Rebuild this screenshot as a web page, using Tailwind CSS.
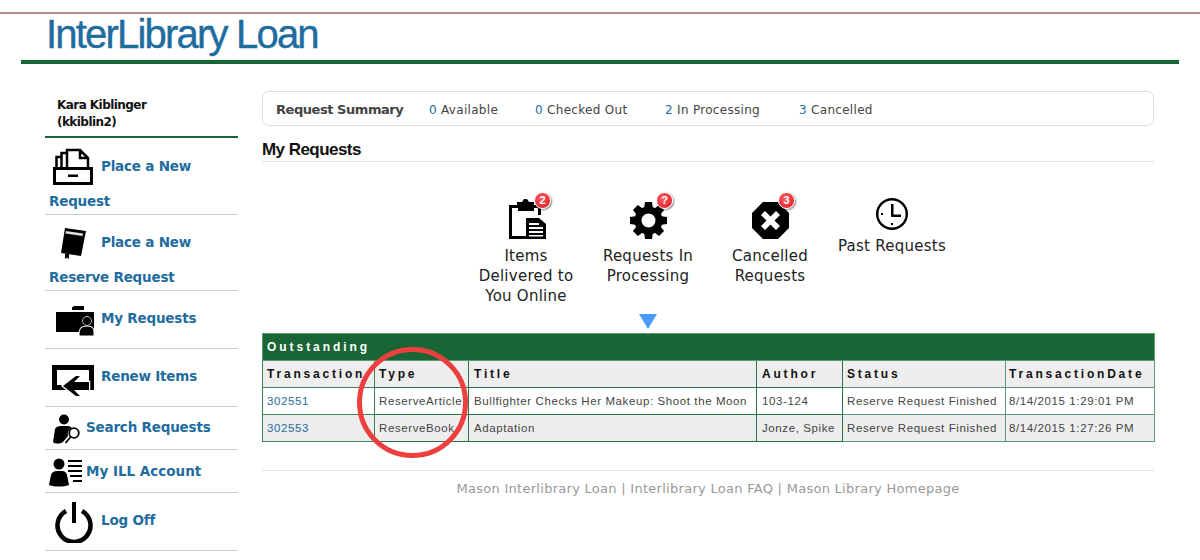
<!DOCTYPE html>
<html lang="en">
<head>
    <meta charset="UTF-8">
    <title>InterLibrary Loan</title>
    <script src="https://cdn.jsdelivr.net/npm/@tailwindcss/browser@4"></script>
</head>
<body class="bg-white font-['DejaVu_Sans',sans-serif] overflow-hidden">
<div class="relative w-[1200px] h-[560px] pt-[12px]">

    <!-- Header -->
    <div class="h-[1.5px] bg-[#b38f8c]"></div>
    <header class="mx-[21px] h-[47px] border-b-[4px] border-[#1a6535] box-content -mt-px">
        <h1 class="pl-[25px] text-[40px] leading-[42px] tracking-[-1.8px] text-[#1f6c9f] [-webkit-text-stroke:0.4px_#1f6c9f] font-['Liberation_Sans',sans-serif]">InterLibrary Loan</h1>
    </header>

    <div class="flex pt-[27px]">
        <!-- Sidebar -->
        <nav class="ml-[45px] w-[193px] text-[13.5px] font-bold text-[#1f6c9f] tracking-[-0.2px]">
            <div class="h-[47px] pl-[12px] pt-[6px] border-b-[2px] border-[#1a6535] text-[12px] leading-[17px] text-[#111] tracking-[-0.55px] mb-[9px]">Kara Kiblinger<br>(kkiblin2)</div>

            <a class="block h-[68px] border-b border-[#ccc]">
                <div class="flex h-[39px] items-center">
                    <svg class="ml-[8px] w-[40px] h-[37px] mr-[8px]" viewBox="0 0 40 37">
                        <path d="M3.500 19V9H8M8.500 19V5H13M14 19V2H27L35 10V19M27 2V10H35" fill="none" stroke="#000" stroke-width="2.500"/>
                        <path d="M1.500 20.500h37v15h-37z" fill="#fff" stroke="#000" stroke-width="3"/>
                        <path d="M15 26.500h10v2.500H15z" fill="#000"/>
                    </svg>
                    <span class="mt-[1px]">Place a New</span>
                </div>
                <div class="pl-[4px] pt-[6px] leading-[18px]">Request</div>
            </a>

            <a class="block h-[76px] border-b border-[#ccc] pt-[12px]">
                <div class="flex h-[32px] items-center">
                    <svg class="ml-[14px] w-[28px] h-[32px] mr-[14px]" viewBox="0 0 28 32">
                        <path d="M6 1 27 4 22 29 2 26z" fill="#000"/><path d="M7 4 24 6.500 23.500 9 6.500 6.500z" fill="#ddd"/><path d="M6 27h4v5L8 30.500 6 32z" fill="#000"/>
                    </svg>
                    <span>Place a New</span>
                </div>
                <div class="pl-[4px] pt-[9px] leading-[18px]">Reserve Request</div>
            </a>

            <a class="flex h-[58px] border-b border-[#ccc] items-start pt-[15px]">
                <svg class="ml-[11px] w-[38px] h-[30px] mr-[7px]" viewBox="0 0 38 30">
                    <path d="M16 4V1.500L18 0h10v4z" fill="#000"/>
                    <path d="M0 6h38v20H0z" fill="#000"/>
                    <circle cx="31" cy="15" r="4" fill="#000" stroke="#fff" stroke-width="1.500" paint-order="stroke"/>
                    <path d="M23.500 29.500c0-6 1-9 7.500-9s6.500 3 6.500 9z" fill="#000" stroke="#fff" stroke-width="2" paint-order="stroke"/>
                </svg>
                <span class="mt-[3px] leading-[18px]">My Requests</span>
            </a>

            <a class="flex h-[58px] border-b border-[#ccc] items-start pt-[16px]">
                <svg class="ml-[7px] w-[42px] h-[32px] mr-[7px]" viewBox="0 0 42 32">
                    <path fill-rule="evenodd" d="M0 0h42v25H0zM5 5v15h32V5z" fill="#000"/>
                    <path d="M11 21 24 11H28L22 17H37V25H22L28 31H24z" fill="#000" stroke="#fff" stroke-width="2.500" paint-order="stroke"/>
                </svg>
                <span class="mt-[2px] leading-[18px]">Renew Items</span>
            </a>

            <a class="flex h-[43px] border-b border-[#ccc] items-start pt-[7px]">
                <svg class="ml-[7px] w-[28px] h-[30px] mr-[6px]" viewBox="0 0 28 30">
                    <circle cx="12" cy="5.500" r="5" fill="#000"/>
                    <path d="M1 28 3 15c1-2 3-3 6-3h7c2 0 3 1 4 2-3 1-5 4-4 8l-5 6c-3 2-8 2-10 0z" fill="#000"/>
                    <circle cx="22" cy="19" r="4.800" fill="#fff" stroke="#000" stroke-width="1.800"/>
                    <path d="M18.500 23l-5 6" stroke="#000" stroke-width="1.800"/>
                </svg>
                <span class="mt-[4px] leading-[18px]">Search Requests</span>
            </a>

            <a class="flex h-[43px] border-b border-[#ccc] items-start pt-[8px]">
                <svg class="ml-[4px] w-[33px] h-[29px] mr-[4px]" viewBox="0 0 33 29">
                    <circle cx="10" cy="6" r="5.500" fill="#000"/>
                    <path d="M0 27 2 17c1-3 3-4 6-4h5c3 0 4 1 5 4l2 10c-6 2-14 2-20 0z" fill="#000"/>
                    <path d="M19 2h14v2H19zM19 7h14v2H19zM19 12h14v2H19zM21 17h12v2H21zM24 22h9v2h-9z" fill="#000"/>
                </svg>
                <span class="mt-[4px] leading-[18px] tracking-[0px]">My ILL Account</span>
            </a>

            <a class="flex h-[58px] border-b border-[#ccc] items-start pt-[9px]">
                <svg class="ml-[10px] w-[38px] h-[41px] mr-[8px]" viewBox="0 0 38 41">
                    <path d="M11 9a16.500 16.500 0 1 0 16 0" fill="none" stroke="#000" stroke-width="4.500"/>
                    <path d="M17 0h4v21h-4z" fill="#000"/>
                </svg>
                <span class="mt-[9px] leading-[18px]">Log Off</span>
            </a>
        </nav>

        <!-- Main -->
        <main class="ml-[24px] w-[892px]">
            <div class="flex items-center h-[35px] pt-[3px] border border-[#ddd] rounded-[7px] text-[12px] text-[#444] tracking-[0.3px] shadow-[0_0_2px_rgba(0,0,0,0.05)]">
                <b class="ml-[13px] w-[153px] text-[13px] tracking-[-0.45px]">Request Summary</b>
                <span class="w-[106px]"><span class="text-[#1f6c9f]">0</span> Available</span>
                <span class="w-[130px]"><span class="text-[#1f6c9f]">0</span> Checked Out</span>
                <span class="w-[134px]"><span class="text-[#1f6c9f]">2</span> In Processing</span>
                <span><span class="text-[#1f6c9f]">3</span> Cancelled</span>
            </div>

            <h2 class="mt-[14px] pb-[2px] h-[22px] border-b border-[#e5e5e5] font-['Liberation_Sans',sans-serif] font-bold text-[17px] leading-[20px] tracking-[-0.55px] text-[#111]">My Requests</h2>

            <div class="mt-[34px] flex pl-[203px] text-[15px] leading-[20px] text-[#222] text-center tracking-[0.25px] h-[117px]">
                <div class="relative w-[122px]">
                    <svg class="mx-auto mt-[3px] mb-[7px] w-[40px] h-[40px] relative left-[2px]" viewBox="0 0 40 40">
                        <path d="M1 6h8V3h5l2-3h3l2 3h5v3h7v10h-3V9h-4v3H10V9H4v28h22v3H1z" fill="#000"/>
                        <path d="M18 19h13l7 6v15H18z" fill="#000"/>
                        <path d="M21 24h10v2H21zM21 28h14v2H21zM21 32h14v2H21zM21 36h14v1.500H21z" fill="#fff"/>
                    </svg>
                    <div>Items<br>Delivered to<br>You Online</div>
                    <span class="absolute left-[69px] top-[-4px] w-[17px] h-[17px] rounded-full bg-[radial-gradient(circle_at_40%_35%,#ff5a5f,#dc1a24)] border border-white shadow-[1px_1px_2px_rgba(0,0,0,0.5)] text-white text-[11px] leading-[15px] font-bold tracking-normal font-['Liberation_Sans',sans-serif]">2</span>
                </div>
                <div class="relative w-[122px]">
                    <svg class="mx-auto mt-[6px] mb-[7px] w-[37px] h-[37px]" viewBox="0 0 37 37">
                        <circle cx="18.500" cy="18.500" r="10.500" fill="none" stroke="#000" stroke-width="7"/>
                        <g fill="#000">
                            <path d="M15 0h7l1 7h-9z"/>
                            <path d="M15 0h7l1 7h-9z" transform="rotate(45 18.500 18.500)"/>
                            <path d="M15 0h7l1 7h-9z" transform="rotate(90 18.500 18.500)"/>
                            <path d="M15 0h7l1 7h-9z" transform="rotate(135 18.500 18.500)"/>
                            <path d="M15 0h7l1 7h-9z" transform="rotate(180 18.500 18.500)"/>
                            <path d="M15 0h7l1 7h-9z" transform="rotate(225 18.500 18.500)"/>
                            <path d="M15 0h7l1 7h-9z" transform="rotate(270 18.500 18.500)"/>
                            <path d="M15 0h7l1 7h-9z" transform="rotate(315 18.500 18.500)"/>
                        </g>
                    </svg>
                    <div>Requests In<br>Processing</div>
                    <span class="absolute left-[69px] top-[-4px] w-[17px] h-[17px] rounded-full bg-[radial-gradient(circle_at_40%_35%,#ff5a5f,#dc1a24)] border border-white shadow-[1px_1px_2px_rgba(0,0,0,0.5)] text-white text-[11px] leading-[15px] font-bold tracking-normal font-['Liberation_Sans',sans-serif]">?</span>
                </div>
                <div class="relative w-[122px]">
                    <svg class="mx-auto mt-[6px] mb-[7px] w-[37px] h-[37px]" viewBox="0 0 37 37">
                        <path d="M11 0h15l11 11v15L26 37H11L0 26V11z" fill="#000"/>
                        <path d="M9 13l4-4 5.500 5.500L24 9l4 4-5.500 5.500L28 24l-4 4-5.500-5.500L13 28l-4-4 5.500-5.500z" fill="#fff"/>
                    </svg>
                    <div>Cancelled<br>Requests</div>
                    <span class="absolute left-[69px] top-[-4px] w-[17px] h-[17px] rounded-full bg-[radial-gradient(circle_at_40%_35%,#ff5a5f,#dc1a24)] border border-white shadow-[1px_1px_2px_rgba(0,0,0,0.5)] text-white text-[11px] leading-[15px] font-bold tracking-normal font-['Liberation_Sans',sans-serif]">3</span>
                </div>
                <div class="w-[122px]">
                    <svg class="mx-auto mt-[2px] mb-[6px] w-[32px] h-[32px]" viewBox="0 0 32 32">
                        <circle cx="16" cy="16" r="14.800" fill="none" stroke="#000" stroke-width="2.400"/>
                        <path d="M15 6h2.500v10.500H25V19H15z" fill="#000"/>
                        <path d="M5 15h2v2H5zM15 25h2v2h-2z" fill="#000"/>
                    </svg>
                    <div>Past Requests</div>
                </div>
            </div>

            <!-- Table -->
            <div class="relative h-[20px]">
                <svg class="absolute left-[377px] top-[1px] w-[18px] h-[15px]" viewBox="0 0 18 15"><path d="M0 0h18L9 15z" fill="#4a9bf5"/></svg>
            </div>
            <table class="w-[892px] table-fixed border-collapse font-['Liberation_Sans',sans-serif] text-[11.5px] text-[#444] tracking-[0.6px]">
                <colgroup>
                    <col class="w-[112px]"><col class="w-[94px]"><col class="w-[288px]"><col class="w-[86px]"><col class="w-[163px]"><col class="w-[149px]">
                </colgroup>
                <thead>
                    <tr class="h-[27px] bg-[#1a6535]">
                        <th colspan="6" class="pl-[4px] text-left text-white text-[12px] font-bold tracking-[2.95px] border border-[#5f9a76]">Outstanding</th>
                    </tr>
                    <tr class="h-[27px] bg-[#eee] text-[#111] text-[12px] text-left tracking-[2.8px]">
                        <th class="pl-[4px] border border-[#3f8259] font-bold whitespace-nowrap">Transaction</th>
                        <th class="pl-[4px] border border-[#2b7047] font-bold">Type</th>
                        <th class="pl-[5px] border border-[#2b7047] font-bold">Title</th>
                        <th class="pl-[5px] border border-[#2b7047] font-bold">Author</th>
                        <th class="pl-[4px] border border-[#5f9a76] font-bold">Status</th>
                        <th class="pl-[3px] border border-[#5f9a76] font-bold whitespace-nowrap">TransactionDate</th>
                    </tr>
                </thead>
                <tbody>
                    <tr class="h-[27px] bg-white">
                        <td class="pl-[4px] pt-[2px] border border-[#3f8259] text-[#1f6c9f]">302551</td>
                        <td class="pl-[4px] pt-[2px] border border-[#2b7047] whitespace-nowrap">ReserveArticle</td>
                        <td class="pl-[5px] pt-[2px] border border-[#2b7047] whitespace-nowrap">Bullfighter Checks Her Makeup: Shoot the Moon</td>
                        <td class="pl-[5px] pt-[2px] border border-[#2b7047]">103-124</td>
                        <td class="pl-[4px] pt-[2px] border border-[#5f9a76] whitespace-nowrap">Reserve Request Finished</td>
                        <td class="pl-[3px] pt-[2px] border border-[#5f9a76] whitespace-nowrap">8/14/2015 1:29:01 PM</td>
                    </tr>
                    <tr class="h-[27px] bg-[#eee]">
                        <td class="pl-[4px] pt-[2px] border border-[#3f8259] text-[#1f6c9f]">302553</td>
                        <td class="pl-[4px] pt-[2px] border border-[#2b7047] whitespace-nowrap">ReserveBook</td>
                        <td class="pl-[5px] pt-[2px] border border-[#2b7047]">Adaptation</td>
                        <td class="pl-[5px] pt-[2px] border border-[#2b7047] whitespace-nowrap">Jonze, Spike</td>
                        <td class="pl-[4px] pt-[2px] border border-[#5f9a76] whitespace-nowrap">Reserve Request Finished</td>
                        <td class="pl-[3px] pt-[2px] border border-[#5f9a76] whitespace-nowrap">8/14/2015 1:27:26 PM</td>
                    </tr>
                </tbody>
            </table>

            <footer class="mt-[28px] pt-[9px] border-t border-[#e2e2e2] text-center text-[13px] leading-[17px] tracking-[0.28px] text-[#999]">
                Mason Interlibrary Loan | Interlibrary Loan FAQ | Mason Library Homepage
            </footer>
        </main>
    </div>

    <!-- Red annotation circle drawn over the table -->
    <div class="absolute left-[357px] top-[347px] w-[111px] h-[111px] rounded-full border-[5px] border-[#ee3f3f]"></div>
</div>
</body>
</html>
